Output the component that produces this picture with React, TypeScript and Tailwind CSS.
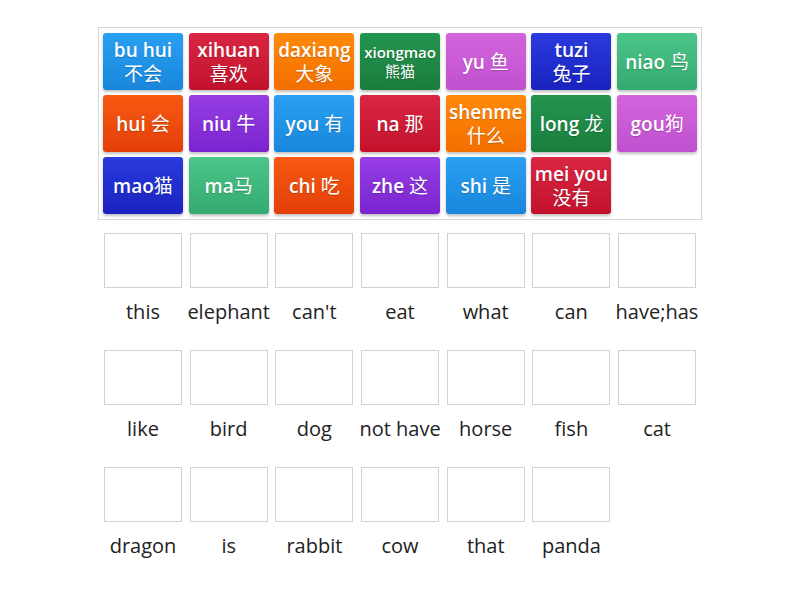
import React from "react";

// Tile colours, picked off the reference. Each one is a light top -> darker bottom gradient.
const BLUE = "bg-gradient-to-b from-[#2aa0f2] to-[#1886dc]";
const RED = "bg-gradient-to-b from-[#d92643] to-[#c3112c]";
const ORANGE = "bg-gradient-to-b from-[#ff8a0a] to-[#f36e00]";
const GREEN = "bg-gradient-to-b from-[#249550] to-[#1a7d3e]";
const ORCHID = "bg-gradient-to-b from-[#d464dc] to-[#c050cf]";
const NAVY = "bg-gradient-to-b from-[#2a3ade] to-[#1a22bf]";
const TEAL = "bg-gradient-to-b from-[#4cc58a] to-[#33ab70]";
const FLAME = "bg-gradient-to-b from-[#f75a12] to-[#e33e08]";
const PURPLE = "bg-gradient-to-b from-[#963ee4] to-[#7b22cf]";

type Tile = { py: string; zh: string; color: string; stacked?: boolean; small?: boolean };

const TILES: Tile[] = [
  { py: "bu hui", zh: "不会", color: BLUE, stacked: true },
  { py: "xihuan", zh: "喜欢", color: RED, stacked: true },
  { py: "daxiang", zh: "大象", color: ORANGE, stacked: true },
  { py: "xiongmao", zh: "熊猫", color: GREEN, stacked: true, small: true },
  { py: "yu", zh: "鱼", color: ORCHID },
  { py: "tuzi", zh: "兔子", color: NAVY, stacked: true },
  { py: "niao", zh: "鸟", color: TEAL },
  { py: "hui", zh: "会", color: FLAME },
  { py: "niu", zh: "牛", color: PURPLE },
  { py: "you", zh: "有", color: BLUE },
  { py: "na", zh: "那", color: RED },
  { py: "shenme", zh: "什么", color: ORANGE, stacked: true },
  { py: "long", zh: "龙", color: GREEN },
  { py: "gou", zh: "狗", color: ORCHID },
  { py: "mao", zh: "猫", color: NAVY },
  { py: "ma", zh: "马", color: TEAL },
  { py: "chi", zh: "吃", color: FLAME },
  { py: "zhe", zh: "这", color: PURPLE },
  { py: "shi", zh: "是", color: BLUE },
  { py: "mei you", zh: "没有", color: RED, stacked: true },
];

// a few tiles have no space between pinyin and hanzi
const TIGHT = new Set(["gou", "mao", "ma"]);

const WORDS = [
  ["this", "elephant", "can't", "eat", "what", "can", "have;has"],
  ["like", "bird", "dog", "not have", "horse", "fish", "cat"],
  ["dragon", "is", "rabbit", "cow", "that", "panda"],
];

const FONT = "font-['Open_Sans','Noto_Sans_CJK_SC',sans-serif]";

function TileCard({ t }: { t: Tile }) {
  return (
    <div
      className={`${t.color} h-[57px] w-[80px] rounded-[3px] shadow-[0_2px_3px_rgba(0,0,0,0.25)] flex flex-col items-center justify-center text-white font-semibold [text-shadow:0_1px_1px_rgba(0,0,0,0.2)] ${
        t.small ? "text-[15px] leading-[19px]" : "text-[19px] leading-[24px]"
      }`}
    >
      {t.stacked ? (
        <>
          <span>{t.py}</span>
          <span className="font-normal">{t.zh}</span>
        </>
      ) : (
        <span>
          {t.py}
          {TIGHT.has(t.py) ? "" : " "}
          <span className="font-normal">{t.zh}</span>
        </span>
      )}
    </div>
  );
}

export default function App() {
  return (
    <div className={`min-h-[600px] w-[800px] bg-white ${FONT}`}>
      <div className="mx-auto w-[604px] pt-[27px]">
        <div className="border border-[#d6d6d6] px-[4px] pt-[5px] pb-[5px]">
          <div className="grid grid-cols-[repeat(7,80px)] gap-x-[5.7px] gap-y-[5px]">
            {TILES.map((t) => (
              <TileCard key={t.py} t={t} />
            ))}
          </div>
        </div>

        <div className="mt-[13px] flex flex-col gap-[26px] px-[5px]">
          {WORDS.map((row, r) => (
            <div key={r} className="flex gap-x-[5.7px]">
              {row.map((w) => (
                <div key={w} className="flex w-[80px] flex-col items-center">
                  <div className="h-[55px] w-[78px] border border-[#d2d2d2] bg-white" />
                  <div className="mt-[12px] h-[24px] whitespace-nowrap text-[20px] leading-[24px] text-[#222]">
                    {w}
                  </div>
                </div>
              ))}
            </div>
          ))}
        </div>
      </div>
    </div>
  );
}
